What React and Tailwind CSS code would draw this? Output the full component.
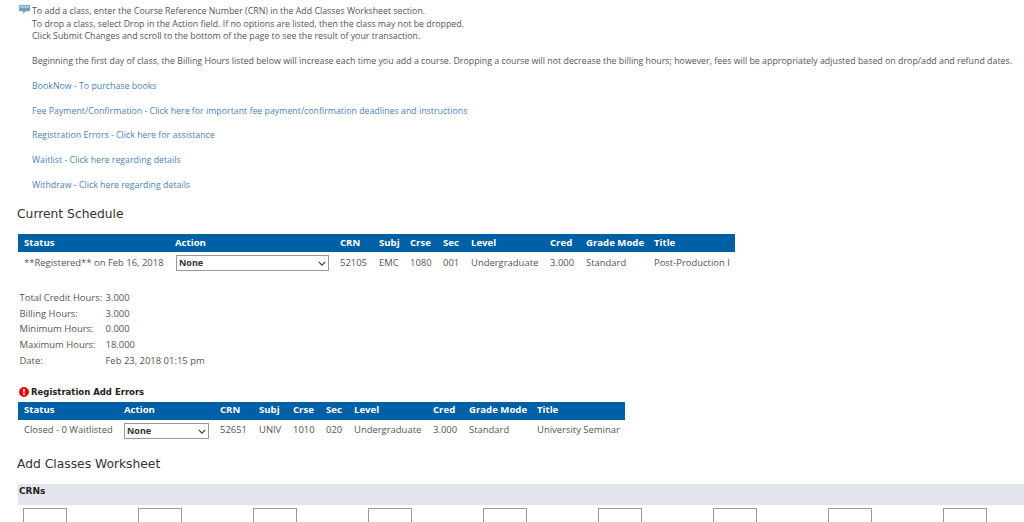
const openSans = "font-['Open_Sans',sans-serif]";

const links = [
  "BookNow - To purchase books",
  "Fee Payment/Confirmation - Click here for important fee payment/confirmation deadlines and instructions",
  "Registration Errors - Click here for assistance",
  "Waitlist - Click here regarding details",
  "Withdraw - Click here regarding details",
];

const hours = [
  ["Total Credit Hours:", "3.000"],
  ["Billing Hours:", "3.000"],
  ["Minimum Hours:", "0.000"],
  ["Maximum Hours:", "18.000"],
  ["Date:", "Feb 23, 2018 01:15 pm"],
];

const headers = ["CRN", "Subj", "Crse", "Sec", "Level", "Cred", "Grade Mode", "Title"];

function ScheduleTable({ widthClass, cols, selectClass, status, row }) {
  return (
    <table className={`${widthClass} table-fixed border-collapse text-[9.45px] text-[#555]`}>
      <colgroup>
        {cols.map((w, i) => (
          <col key={i} style={{ width: w }} />
        ))}
      </colgroup>
      <thead>
        <tr className="h-[18px] bg-[#0060a6] text-left text-[9.6px] text-white">
          <th className="pl-1.5 font-bold">Status</th>
          <th className="font-bold">Action</th>
          {headers.map((h) => (
            <th key={h} className="font-bold whitespace-nowrap">{h}</th>
          ))}
        </tr>
      </thead>
      <tbody>
        <tr className="h-[21px]">
          <td className="pt-px pl-1.5 whitespace-nowrap">{status}</td>
          <td>
            <div className={`relative mt-px ${selectClass} h-[16px]`}>
              <select className="h-full w-full appearance-none border border-[#999] bg-white pt-px pl-[2px] text-[9px] font-bold text-[#333]">
                <option>None</option>
              </select>
              <svg viewBox="0 0 10 6" className="absolute top-[6px] right-[3px] h-[5px] w-[8px]">
                <path d="M1 1l4 4 4-4" fill="none" stroke="#333" strokeWidth="1.4" />
              </svg>
            </div>
          </td>
          {row.map((c, i) => (
            <td key={i} className="pt-px whitespace-nowrap">{c}</td>
          ))}
        </tr>
      </tbody>
    </table>
  );
}

export default function App() {
  return (
    <div className={`h-[522px] overflow-hidden bg-white ${openSans} text-[8.8px] leading-[12.4px] text-[#555]`}>
      <div className="relative pt-[5.4px] pl-[32px]">
        <svg viewBox="0 0 12 10" className="absolute top-[5px] left-[19px] h-[9px] w-[11px]">
          <path d="M0 0h12v7H7L4.5 10V7H0z" fill="#6f9fc9" />
          <path d="M1 1h10v2H1z" fill="#b5d0e8" />
        </svg>
        <p>To add a class, enter the Course Reference Number (CRN) in the Add Classes Worksheet section.</p>
        <p>To drop a class, select Drop in the Action field. If no options are listed, then the class may not be dropped.</p>
        <p>Click Submit Changes and scroll to the bottom of the page to see the result of your transaction.</p>
        <p className="mt-[12.4px] text-[8.84px] whitespace-nowrap">
          Beginning the first day of class, the Billing Hours listed below will increase each time you add a course. Dropping a course will not decrease the billing hours; however, fees will be appropriately adjusted based on drop/add and refund dates.
        </p>
        {links.map((l) => (
          <p key={l} className="mt-[12.4px] text-[#4f7fb5]">
            <a href="#">{l}</a>
          </p>
        ))}
      </div>

      <h2 className="mt-[15.6px] pl-[17px] font-['DejaVu_Sans',sans-serif] text-[12.3px] leading-[14px] text-[#333]">Current Schedule</h2>

      <div className="mt-[13px] pl-[18px]">
        <ScheduleTable
          widthClass="w-[717px]"
          cols={[157, 165, 39, 31, 33, 28, 79, 36, 68, 81]}
          selectClass="ml-px w-[153px]"
          status="**Registered** on Feb 16, 2018"
          row={["52105", "EMC", "1080", "001", "Undergraduate", "3.000", "Standard", "Post-Production I"]}
        />
      </div>

      <div className="mt-[17px] grid w-[260px] grid-cols-[86px_1fr] pl-[19.5px] text-[9.45px] leading-[15.7px]">
        {hours.map(([k, v]) => (
          <div key={k} className="contents">
            <span className="whitespace-nowrap">{k}</span>
            <span className="whitespace-nowrap">{v}</span>
          </div>
        ))}
      </div>

      <div className="mt-[17px] flex h-[14px] items-center gap-[2px] pl-[19px] font-['DejaVu_Sans',sans-serif] text-[8.5px] font-bold text-[#222]">
        <svg viewBox="0 0 10 10" className="mb-[2px] h-[10px] w-[10px]">
          <circle cx="5" cy="5" r="5" fill="#e01010" />
          <path d="M4.2 2h1.6l-.2 3.8H4.4z M4.2 6.6h1.6v1.5H4.2z" fill="#fff" />
        </svg>
        <span>Registration Add Errors</span>
      </div>

      <div className="mt-[2px] pl-[18px]">
        <ScheduleTable
          widthClass="w-[607px]"
          cols={[106, 96, 39, 34, 33, 28, 79, 36, 68, 88]}
          selectClass="w-[85px]"
          status="Closed - 0 Waitlisted"
          row={["52651", "UNIV", "1010", "020", "Undergraduate", "3.000", "Standard", "University Seminar"]}
        />
      </div>

      <h2 className="mt-[16px] pl-[17px] font-['DejaVu_Sans',sans-serif] text-[12.3px] leading-[14px] text-[#333]">Add Classes Worksheet</h2>

      <div className="mt-[13px] ml-[18px] h-[21px] bg-[#e3e5ee] pt-[1px] pl-[1px] font-['DejaVu_Sans',sans-serif] text-[9px] font-bold text-[#222]">CRNs</div>

      <div className="mt-[3px] flex gap-[70.95px] pl-[23px]">
        {Array.from({ length: 9 }).map((_, i) => (
          <input key={i} type="text" className="h-[24px] w-[44px] shrink-0 border border-[#9a9a9a] bg-white" />
        ))}
      </div>
    </div>
  );
}
